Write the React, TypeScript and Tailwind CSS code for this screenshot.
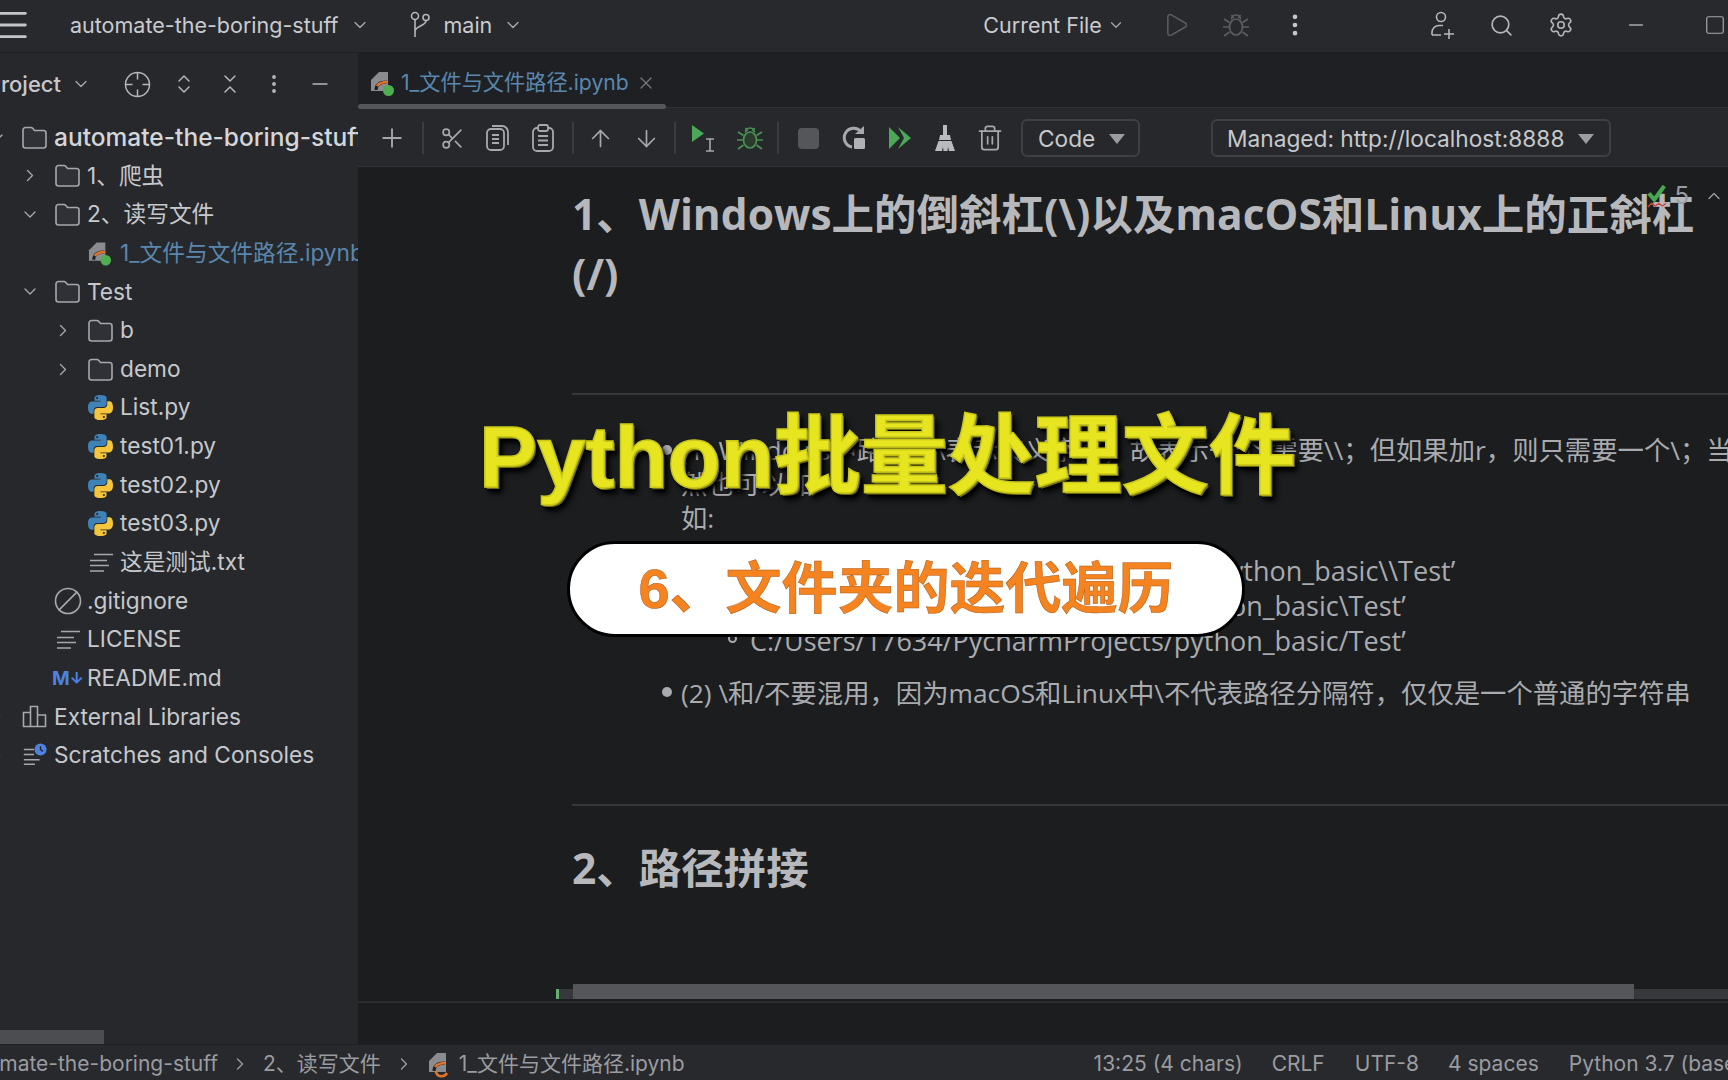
import React from "react";
import {
  ArrowDown, ArrowUp, Ban, ChevronDown, ChevronRight, ChevronUp, ChevronsDownUp, ChevronsUpDown,
  EllipsisVertical, Menu, Minus, Play, Plus, Scissors, Search, Settings, Square, Trash2, X,
} from "lucide-react";

const ui = "font-['Inter','Noto_Sans_CJK_SC',sans-serif]";

function Folder() {
  return (
    <svg width="25" height="25" viewBox="0 0 25 25" fill="#2f3136" stroke="#a6a8ad" strokeWidth="1.6">
      <path d="M1 5a2.5 2.5 0 0 1 2.5-2.5h5.600a2 2 0 0 1 1.500.7l2 2.300h9.400A2.500 2.500 0 0 1 24 8v12.500a2.500 2.500 0 0 1-2.500 2.500h-18A2.500 2.500 0 0 1 1 20.500z" />
    </svg>
  );
}

function PythonIcon() {
  const blue = "M54.9 0C26.9 0 28.6 12.2 28.6 12.2l0 12.6h26.7v3.8H18c0 0-18-2-18 26.3s15.7 27.3 15.7 27.3h9.4V69s-.5-15.7 15.4-15.7h26.6s14.9.2 14.9-14.4V14.6S85 0 54.9 0zM40.2 8.5a4.8 4.8 0 1 1 0 9.6 4.8 4.8 0 0 1 0-9.6z";
  return (
    <svg width="25" height="25" viewBox="0 0 110 110">
      <path d={blue} fill="#3f82b8" />
      <path d={blue} fill="#f5c63c" transform="rotate(180 55 55)" />
    </svg>
  );
}

function Lines({ color = "#a6a8ad" }: { color?: string }) {
  return (
    <svg width="25" height="25" viewBox="0 0 25 25" stroke={color} strokeWidth="1.6">
      <path d="M6 4.500h19M2 10.500h17M2 15.500h19M2 21h14" />
    </svg>
  );
}

function Notebook({ dot = true }: { dot?: boolean }) {
  return (
    <svg width="26" height="27" viewBox="0 0 26 27">
      <path d="M1 10l8-8h9v19H1z" fill="#8a8c90" />
      <path d="M6 20c0-6 4-8 11-8" fill="none" stroke="#1f2023" strokeWidth="3" />
      <path d="M7 16c2-3 6-4 11-4" fill="none" stroke="#e2742a" strokeWidth="2.6" />
      {dot ? <circle cx="18.500" cy="20.500" r="5.500" fill="#4fae4f" /> : <path d="M8 20c0 6 8 7 11 2" fill="none" stroke="#e2742a" strokeWidth="2.6" />}
    </svg>
  );
}

function Markdown() {
  return (
    <span className="flex items-center text-[19px] font-bold leading-none text-[#4f82e0] font-['Inter',sans-serif] tracking-[-1px]">
      M<span className="text-[16px] ml-[1px]">↓</span>
    </span>
  );
}

function Libraries() {
  return (
    <svg width="25" height="25" viewBox="0 0 25 25" fill="none" stroke="#a6a8ad" strokeWidth="1.6">
      <path d="M1.500 8.500h7v14h-7zM8.500 2.500h7v20h-7zM15.500 11h8v11.500h-8z" />
    </svg>
  );
}

function Scratches() {
  return (
    <svg width="27" height="27" viewBox="0 0 27 27" stroke="#a6a8ad" strokeWidth="1.6">
      <path d="M2 7h11M2 12.500h11M2 18h17M2 23h12" />
      <circle cx="20" cy="7" r="6.500" fill="#4f82e0" stroke="none" />
      <path d="M20 3.500V7l2.500 2" stroke="#26282c" fill="none" />
    </svg>
  );
}

function Branch() {
  return (
    <svg width="24" height="28" viewBox="0 0 24 28" fill="none" stroke="#b4b6ba" strokeWidth="1.6">
      <circle cx="7" cy="5" r="3.500" />
      <circle cx="18" cy="6.500" r="3" />
      <path d="M7 8.500V26M18 9.500c0 6-11 5-11 11" />
    </svg>
  );
}

function UserAdd() {
  return (
    <svg width="28" height="30" viewBox="0 0 28 30" fill="none" stroke="#b4b6ba" strokeWidth="1.6">
      <circle cx="12" cy="7" r="4.500" />
      <path d="M3 25v-2.500a7 7 0 0 1 7-7h4M20 19v10M15 24h10M3 25h9" />
    </svg>
  );
}

function Target() {
  return (
    <svg width="27" height="27" viewBox="0 0 27 27" fill="none" stroke="#b4b6ba" strokeWidth="1.5">
      <circle cx="13.500" cy="13.500" r="12" />
      <path d="M13.500 1.500v7M13.500 18.500v7M1.500 13.500h7M18.500 13.500h7" />
    </svg>
  );
}

function BugIcon({ stroke, fill, size = 28 }: { stroke: string; fill: string; size?: number }) {
  return (
    <svg width={size} height={size} viewBox="0 0 28 28" fill="none" stroke={stroke} strokeWidth="1.700">
      <path d="M9.500 8.500a4.500 4.500 0 0 1 9 0" />
      <ellipse cx="14" cy="16" rx="6.500" ry="8" fill={fill} />
      <path d="M9.500 4l2 3M18.500 4l-2 3M2 8l5.500 3.500M26 8l-5.500 3.500M1 16h6.500M27 16h-6.500M2 25l5.500-4M26 25l-5.500-4" />
    </svg>
  );
}

type Row = { label: string; depth: number; arrow?: "open" | "closed"; icon: React.ReactNode; cls?: string };

const rows: Row[] = [
  { label: "automate-the-boring-stuff", depth: 0, arrow: "open", icon: <Folder />, cls: "text-[24.500px] font-medium text-[#d4d6da]" },
  { label: "1、爬虫", depth: 1, arrow: "closed", icon: <Folder /> },
  { label: "2、读写文件", depth: 1, arrow: "open", icon: <Folder /> },
  { label: "1_文件与文件路径.ipynb", depth: 2, icon: <Notebook />, cls: "text-[22.700px] text-[#5a87ad]" },
  { label: "Test", depth: 1, arrow: "open", icon: <Folder /> },
  { label: "b", depth: 2, arrow: "closed", icon: <Folder /> },
  { label: "demo", depth: 2, arrow: "closed", icon: <Folder /> },
  { label: "List.py", depth: 2, icon: <PythonIcon /> },
  { label: "test01.py", depth: 2, icon: <PythonIcon /> },
  { label: "test02.py", depth: 2, icon: <PythonIcon /> },
  { label: "test03.py", depth: 2, icon: <PythonIcon /> },
  { label: "这是测试.txt", depth: 2, icon: <Lines /> },
  { label: ".gitignore", depth: 1, icon: <Ban size={30} strokeWidth={1.300} color="#a6a8ad" className="-scale-x-100 shrink-0" /> },
  { label: "LICENSE", depth: 1, icon: <Lines /> },
  { label: "README.md", depth: 1, icon: <Markdown /> },
  { label: "External Libraries", depth: 0, arrow: "closed", icon: <Libraries /> },
  { label: "Scratches and Consoles", depth: 0, arrow: "closed", icon: <Scratches /> },
];

const depthPad = ["pl-0", "pl-[33px]", "pl-[66px]"];

function TreeRow({ row }: { row: Row }) {
  return (
    <div className={`flex h-[38.650px] items-center ml-[-13px] ${depthPad[row.depth]}`}>
      <span className="flex w-5 mr-[15px] shrink-0 justify-center text-[#a6a8ad]">
        {row.arrow === "open" && <ChevronDown size={21} strokeWidth={1.600} />}
        {row.arrow === "closed" && <ChevronRight size={21} strokeWidth={1.600} />}
      </span>
      <span className="flex w-[25px] mr-[7px] shrink-0 items-center justify-center">{row.icon}</span>
      <span className={`whitespace-nowrap leading-none ${row.cls ?? "text-[22.700px] text-[#c6c8cc]"}`}>{row.label}</span>
    </div>
  );
}

function RunCell() {
  return (
    <svg width="32" height="32" viewBox="0 0 32 32" className="ml-[13px] shrink-0">
      <path d="M3 3l12 8.500L3 20z" fill="#4aa856" />
      <path d="M17 17h8M21 17v12M17 29h8" stroke="#a6a8ad" strokeWidth="1.600" fill="none" />
    </svg>
  );
}

function Copy2() {
  return (
    <svg width="26" height="28" viewBox="0 0 26 28" fill="none" stroke="#a6a8ad" strokeWidth="1.800" className="ml-[20px] shrink-0">
      <rect x="2" y="5" width="17" height="21" rx="4" />
      <path d="M7 2h10a6 6 0 0 1 6 6v13M7 11h7M7 15h7M7 19h7" />
    </svg>
  );
}

function Paste() {
  return (
    <svg width="26" height="30" viewBox="0 0 26 30" fill="none" stroke="#a6a8ad" strokeWidth="1.800" className="ml-[19px] shrink-0">
      <rect x="3" y="5" width="20" height="23" rx="4" />
      <rect x="8" y="2" width="10" height="6" rx="2" fill="#26282c" />
      <path d="M8 13h10M8 17.500h10M8 22h10" />
    </svg>
  );
}

function Restart() {
  return (
    <svg width="26" height="26" viewBox="0 0 26 26" fill="none" className="ml-[22px] shrink-0">
      <path d="M20 6.500A9.500 9.500 0 1 0 11 22" stroke="#a6a8ad" strokeWidth="3" />
      <path d="M14 9h9V1z" fill="#a6a8ad" />
      <rect x="13" y="13" width="11" height="11" rx="1.500" fill="#b0b2b6" />
    </svg>
  );
}

function RunAll() {
  return (
    <svg width="26" height="26" viewBox="0 0 26 26" fill="#4aa856" className="ml-[20px] shrink-0">
      <path d="M2 2l11 11L2 24z" />
      <path d="M11 2l13 11-13 11 6-11z" />
    </svg>
  );
}

function Broom() {
  return (
    <svg width="24" height="28" viewBox="0 0 24 28" fill="#b8babd" className="ml-[20px] shrink-0">
      <rect x="10" y="1" width="4" height="10" />
      <path d="M7 11h10l1 5H6z" />
      <path d="M5.500 17h13l3.500 10h-6l-1-4-.5 4h-4l-.5-4-1 4H2z" />
    </svg>
  );
}

export default function App() {
  return (
    <div className={`relative flex h-[1080px] w-[1728px] flex-col overflow-hidden bg-[#1b1d1f] ${ui}`}>
      {/* Title bar */}
      <header className="flex h-[53px] shrink-0 items-center bg-[#27292d] pb-[2px] text-[21.500px] whitespace-nowrap text-[#c9cbcf] border-b border-[#1e2023]">
        <Menu size={40} strokeWidth={1.700} className="ml-[-8px] shrink-0 text-[#c4c6ca]" />
        <span className="ml-[38px]">automate-the-boring-stuff</span>
        <ChevronDown size={20} strokeWidth={1.600} className="ml-[12px] shrink-0 text-[#a6a8ad]" />
        <span className="ml-[38px] shrink-0"><Branch /></span>
        <span className="ml-[11px]">main</span>
        <ChevronDown size={20} strokeWidth={1.600} className="ml-[11px] shrink-0 text-[#a6a8ad]" />
        <span className="ml-[460px]">Current File</span>
        <ChevronDown size={18} strokeWidth={1.600} className="ml-[5px] shrink-0 text-[#a6a8ad]" />
        <Play size={28} strokeWidth={1.300} className="ml-[37px] shrink-0 text-[#5b5d61]" />
        <span className="ml-[32px] shrink-0"><BugIcon stroke="#5b5d61" fill="none" /></span>
        <EllipsisVertical size={28} strokeWidth={2} className="ml-[31px] shrink-0 text-[#c4c6ca]" />
        <span className="ml-[120px] shrink-0"><UserAdd /></span>
        <Search size={25} strokeWidth={1.600} className="ml-[32px] shrink-0 text-[#b4b6ba]" />
        <Settings size={26} strokeWidth={1.500} className="ml-[34px] shrink-0 text-[#b4b6ba]" />
        <Minus size={22} strokeWidth={1.500} className="ml-[51px] shrink-0 text-[#a6a8ad]" />
        <Square size={22} strokeWidth={1.300} className="ml-[57px] shrink-0 text-[#a6a8ad]" />
      </header>

      <div className="flex min-h-0 flex-1">
        {/* Project sidebar */}
        <aside className="relative flex w-[358px] shrink-0 flex-col overflow-hidden bg-[#26282c]">
          <div className="flex h-[65px] shrink-0 items-center pb-[3px] text-[#c6c8cc]">
            <div className="flex w-[61px] shrink-0 justify-end overflow-hidden">
              <span className="text-[22px] font-medium">Project</span>
            </div>
            <ChevronDown size={20} strokeWidth={1.600} className="ml-[10px] shrink-0 text-[#a6a8ad]" />
            <span className="ml-[33px] shrink-0"><Target /></span>
            <ChevronsUpDown size={24} strokeWidth={1.500} className="ml-[21px] shrink-0 text-[#b4b6ba]" />
            <ChevronsDownUp size={24} strokeWidth={1.500} className="ml-[22px] shrink-0 text-[#b4b6ba]" />
            <EllipsisVertical size={24} strokeWidth={1.800} className="ml-[20px] shrink-0 text-[#b4b6ba]" />
            <Minus size={24} strokeWidth={1.500} className="ml-[22px] shrink-0 text-[#b4b6ba]" />
          </div>
          {rows.map((r) => (
            <TreeRow key={r.label} row={r} />
          ))}
          <div className="mt-auto h-[14px] w-[104px] bg-[#4b4d51]" />
        </aside>

        {/* Editor */}
        <main className="relative flex min-w-0 flex-1 flex-col overflow-hidden">
          <div className="relative flex h-[54px] shrink-0 items-center bg-[#1e2023] pl-[12px] pt-[6px]">
            <Notebook />
            <span className="ml-[5px] whitespace-nowrap text-[21.200px] text-[#5a87ad]">1_文件与文件路径.ipynb</span>
            <X size={20} strokeWidth={1.500} className="ml-[7px] shrink-0 text-[#77797d]" />
            <div className="absolute bottom-[-2px] left-0 h-[5px] w-[308px] rounded-full bg-[#55575b]" />
          </div>
          <div className="flex h-[60px] shrink-0 items-center border-y border-[#303236] bg-[#26282c] pt-[2px] text-[#a6a8ad]">
            <Plus size={30} strokeWidth={1.500} className="ml-[19px] shrink-0" />
            <span className="ml-[15px] h-[32px] w-[2px] shrink-0 bg-[#3a3c40]" />
            <Scissors size={25} strokeWidth={1.600} className="ml-[16px] shrink-0" />
            <Copy2 />
            <Paste />
            <span className="ml-[16px] h-[32px] w-[2px] shrink-0 bg-[#3a3c40]" />
            <ArrowUp size={27} strokeWidth={1.500} className="ml-[13px] shrink-0" />
            <ArrowDown size={27} strokeWidth={1.500} className="ml-[19px] shrink-0" />
            <span className="ml-[14px] h-[32px] w-[2px] shrink-0 bg-[#3a3c40]" />
            <RunCell />
            <span className="ml-[15px] shrink-0"><BugIcon stroke="#4a9153" fill="#2c3a2e" /></span>
            <span className="ml-[13px] h-[32px] w-[2px] shrink-0 bg-[#3a3c40]" />
            <span className="ml-[19px] h-[21px] w-[21px] shrink-0 rounded-[4px] bg-[#54565a]" />
            <Restart />
            <RunAll />
            <Broom />
            <Trash2 size={28} strokeWidth={1.500} className="ml-[19px] shrink-0" />
            <div className="ml-[17px] flex h-[38px] w-[119px] shrink-0 items-center rounded-[6px] border-2 border-[#3d3f43] pl-[15px] pt-[2px] text-[22.700px] text-[#c6c8cc]">
              Code
              <span className="ml-[14px] h-0 w-0 border-x-[8px] border-t-[10px] border-x-transparent border-t-[#9a9ca0]" />
            </div>
            <div className="ml-[71px] flex h-[38px] w-[400px] shrink-0 items-center rounded-[6px] border-2 border-[#3d3f43] pl-[14px] pt-[2px] text-[22.700px] whitespace-nowrap text-[#c6c8cc]">
              Managed: http://localhost:8888
              <span className="ml-[14px] h-0 w-0 border-x-[8px] border-t-[10px] border-x-transparent border-t-[#9a9ca0]" />
            </div>
          </div>

          <div className="relative min-h-0 flex-1 overflow-hidden pl-[214px] font-['Open_Sans','Noto_Sans_CJK_SC',sans-serif] text-[#a9abaf]">
            <h1 className="mt-[17px] w-[1140px] text-[42.500px] font-bold leading-[60px] text-[#b6b8bc]">
              1、Windows上的倒斜杠(\)以及macOS和Linux上的正斜杠(/)
            </h1>
            <div className="mt-[89px] h-[2px] w-[1200px] bg-[#36383c]" />
            <div className="relative mt-[38px] whitespace-nowrap pl-[109px] text-[26.350px] leading-[34px]">
              <span className="absolute left-[90px] top-[12px] h-[10px] w-[10px] rounded-full bg-[#a9abaf]" />
              (1) Windows中路径用\表示转义字符，故表示一个\需要\\；但如果加r，则只需要一个\；当
              <br />
              然也可以加
              <br />
              如:
            </div>
            <ul className="mt-[18px] pl-[178px] text-[27px] leading-[35px] whitespace-nowrap">
              <li>C:\\Users\\17634\\PycharmProjects\\python_basic\\Test’</li>
              <li>C:\Users\17634\PycharmProjects\python_basic\Test’</li>
              <li className="relative">
                <span className="absolute left-[-22px] top-[11px] h-[9px] w-[9px] rounded-full border-2 border-[#a9abaf]" />
                C:/Users/17634/PycharmProjects/python_basic/Test’
              </li>
            </ul>
            <div className="relative mt-[17px] whitespace-nowrap pl-[109px] text-[26.350px] leading-[36px]">
              <span className="absolute left-[90px] top-[12px] h-[10px] w-[10px] rounded-full bg-[#a9abaf]" />
              (2) \和/不要混用，因为macOS和Linux中\不代表路径分隔符，仅仅是一个普通的字符串
            </div>
            <div className="mt-[93px] h-[2px] w-[1200px] bg-[#36383c]" />
            <h2 className="mt-[32px] text-[42.500px] font-bold leading-[60px] text-[#b6b8bc]">2、路径拼接</h2>

            <div className="absolute right-[0px] top-[11px] flex items-center font-['Inter',sans-serif] text-[24px] text-[#9a9ca0]">
              <span className="mr-[7px] flex h-[28px] w-[20px] shrink-0">
                <svg width="22" height="28" viewBox="0 0 22 28">
                  <path d="M2 11l6 7L19 3" fill="none" stroke="#45a84f" strokeWidth="4.500" />
                  <path d="M1 26l4-4 4 3 4-3 4 3 4-3" fill="none" stroke="#c8453f" strokeWidth="1.500" />
                </svg>
              </span>
              5
              <ChevronUp size={20} strokeWidth={1.600} className="ml-[15px] mr-[4px] shrink-0" />
            </div>
          </div>

          {/* Horizontal scroll strip */}
          <div className="flex h-[18px] shrink-0 items-end pl-[198px]">
            <span className="h-[10px] w-[3px] bg-[#62b06c]" />
            <div className="relative h-[10px] flex-1 bg-[#36383c]">
              <div className="absolute bottom-0 left-[14px] h-[15px] w-[1061px] bg-[#54565a]" />
            </div>
          </div>
          <div className="mt-[2px] h-[2px] shrink-0 bg-[#2b2d31]" />
          <div className="h-[41px] shrink-0" />
        </main>
      </div>

      {/* Status bar */}
      <footer className="flex h-[36px] shrink-0 items-center border-t border-[#1e2023] bg-[#27292d] pt-[3px] text-[21px] whitespace-nowrap text-[#9a9ca0]">
        <div className="flex w-[218px] shrink-0 justify-end overflow-hidden">
          <span>automate-the-boring-stuff</span>
        </div>
        <ChevronRight size={20} strokeWidth={1.600} className="ml-[12px] shrink-0" />
        <span className="ml-[13px]">2、读写文件</span>
        <ChevronRight size={20} strokeWidth={1.600} className="ml-[13px] shrink-0" />
        <span className="ml-[14px] shrink-0"><Notebook dot={false} /></span>
        <span className="ml-[5px]">1_文件与文件路径.ipynb</span>
        <span className="ml-[409px]">13:25 (4 chars)</span>
        <span className="ml-[29px]">CRLF</span>
        <span className="ml-[30px]">UTF-8</span>
        <span className="ml-[29px]">4 spaces</span>
        <span className="ml-[30px]">Python 3.7 (base)</span>
      </footer>

      {/* Video captions */}
      <div className="absolute left-[479px] top-[401px] whitespace-nowrap font-['Liberation_Sans','Noto_Sans_CJK_SC',sans-serif] text-[87px] font-bold leading-[112px] text-[#e6e51f] [-webkit-text-stroke:1.500px_#c9c71a] [text-shadow:1px_1px_0_#8a8814,2px_2px_0_#6d6b12,3px_4px_3px_#000,5px_6px_6px_#000]">
        Python批量处理文件
      </div>
      <div className="absolute left-[567px] top-[541px] flex h-[96px] w-[678px] items-center justify-center rounded-[48px] border-[3px] border-black bg-white font-['Liberation_Sans','Noto_Sans_CJK_SC',sans-serif] text-[56px] font-bold text-[#f58420] [-webkit-text-stroke:0.500px_#a8591a]">
        6、文件夹的迭代遍历
      </div>
    </div>
  );
}
